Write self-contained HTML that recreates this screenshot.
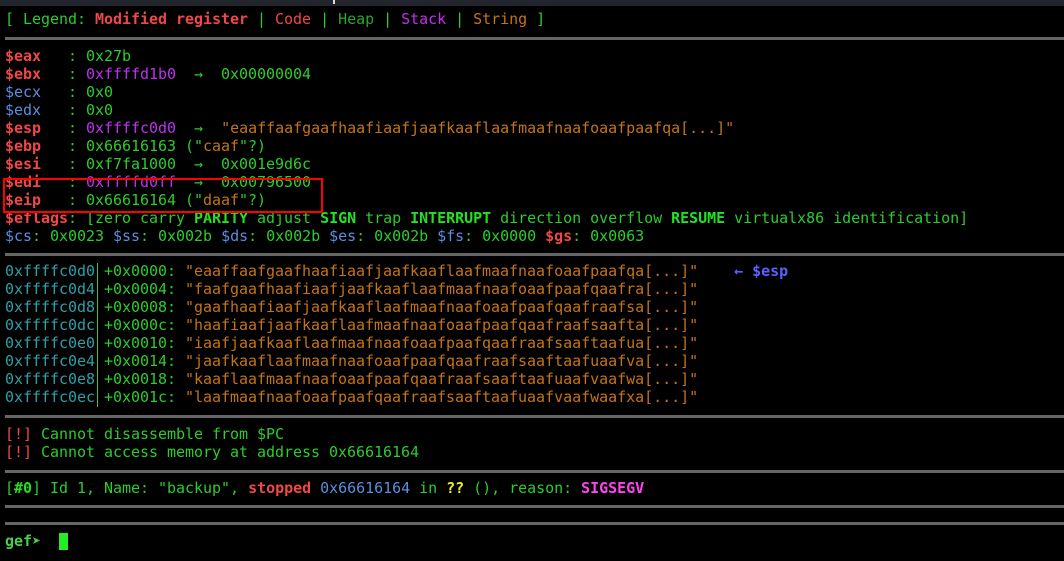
<!DOCTYPE html>
<html><head><meta charset="utf-8"><style>
body{margin:0;width:1064px;height:561px;background:#000;overflow:hidden;position:relative;font-family:"DejaVu Sans Mono","Liberation Mono",monospace;font-size:15px;color:#2ccc2c;letter-spacing:-0.03px}
.l{position:absolute;left:5px;white-space:pre;line-height:18px;height:18px}
.sep{position:absolute;left:5px;right:0;height:3px;background:#666}
.r{color:#f04848;font-weight:bold}
.rr{color:#f04848}
.m{color:#c030f0}
.b{color:#5a8ee0}
.o{color:#c47418}
.c{color:#2aa0a8}
.B{font-weight:bold;color:#22e022}
.e{color:#5a60ff;font-weight:bold}
.y{color:#f0f020;font-weight:bold}
.p{color:#ff44ee;font-weight:bold}
</style></head><body>
<div style="position:absolute;left:0;top:0;width:1064px;height:6px;background:#22252e"></div>
<div style="position:absolute;left:333px;top:0;width:2px;height:4px;background:#ddd"></div>
<div class="l" style="top:10px">[ Legend: <span class="r">Modified register</span> | <span class="rr">Code</span> | <span style="color:#28a828">Heap</span> | <span class="m">Stack</span> | <span class="o">String</span> ]</div>
<div class="sep" style="top:37px"></div>
<div class="l" style="top:47px"><span class="r">$eax  </span> : 0x27b</div>
<div class="l" style="top:65px"><span class="r">$ebx  </span> : <span class="m">0xffffd1b0</span>  →  0x00000004</div>
<div class="l" style="top:83px"><span class="b">$ecx  </span> : 0x0</div>
<div class="l" style="top:101px"><span class="b">$edx  </span> : 0x0</div>
<div class="l" style="top:119px"><span class="r">$esp  </span> : <span class="m">0xffffc0d0</span>  →  <span class="o">"eaaffaafgaafhaafiaafjaafkaaflaafmaafnaafoaafpaafqa[...]"</span></div>
<div class="l" style="top:137px"><span class="r">$ebp  </span> : 0x66616163 ("<span class="o">caaf</span>"?)</div>
<div class="l" style="top:155px"><span class="r">$esi  </span> : 0xf7fa1000  →  0x001e9d6c</div>
<div class="l" style="top:173px"><span class="r">$edi  </span> : <span class="m">0xffffd0ff</span>  →  0x00796500</div>
<div class="l" style="top:191px"><span class="r">$eip  </span> : 0x66616164 ("<span class="o">daaf</span>"?)</div>
<div class="l" style="top:209px"><span class="r">$eflags</span>: [zero carry <span class="B">PARITY</span> adjust <span class="B">SIGN</span> trap <span class="B">INTERRUPT</span> direction overflow <span class="B">RESUME</span> virtualx86 identification]</div>
<div class="l" style="top:227px"><span class="b">$cs</span>: 0x0023 <span class="b">$ss</span>: 0x002b <span class="b">$ds</span>: 0x002b <span class="b">$es</span>: 0x002b <span class="b">$fs</span>: 0x0000 <span class="r">$gs</span>: 0x0063</div>
<div style="position:absolute;left:3px;top:178px;width:316px;height:31px;border:2px solid #f00"></div>
<div class="sep" style="top:253px"></div>
<div style="position:absolute;left:97px;top:263px;width:1px;height:144px;background:#2ccc2c"></div>
<div class="l" style="top:262px"><span class="c">0xffffc0d0</span> +0x0000: <span class="o">"eaaffaafgaafhaafiaafjaafkaaflaafmaafnaafoaafpaafqa[...]"</span>    <span class="e">← $esp</span></div>
<div class="l" style="top:280px"><span class="c">0xffffc0d4</span> +0x0004: <span class="o">"faafgaafhaafiaafjaafkaaflaafmaafnaafoaafpaafqaafra[...]"</span></div>
<div class="l" style="top:298px"><span class="c">0xffffc0d8</span> +0x0008: <span class="o">"gaafhaafiaafjaafkaaflaafmaafnaafoaafpaafqaafraafsa[...]"</span></div>
<div class="l" style="top:316px"><span class="c">0xffffc0dc</span> +0x000c: <span class="o">"haafiaafjaafkaaflaafmaafnaafoaafpaafqaafraafsaafta[...]"</span></div>
<div class="l" style="top:334px"><span class="c">0xffffc0e0</span> +0x0010: <span class="o">"iaafjaafkaaflaafmaafnaafoaafpaafqaafraafsaaftaafua[...]"</span></div>
<div class="l" style="top:352px"><span class="c">0xffffc0e4</span> +0x0014: <span class="o">"jaafkaaflaafmaafnaafoaafpaafqaafraafsaaftaafuaafva[...]"</span></div>
<div class="l" style="top:370px"><span class="c">0xffffc0e8</span> +0x0018: <span class="o">"kaaflaafmaafnaafoaafpaafqaafraafsaaftaafuaafvaafwa[...]"</span></div>
<div class="l" style="top:388px"><span class="c">0xffffc0ec</span> +0x001c: <span class="o">"laafmaafnaafoaafpaafqaafraafsaaftaafuaafvaafwaafxa[...]"</span></div>
<div class="sep" style="top:415px"></div>
<div class="l" style="top:425px"><span class="rr">[!]</span> Cannot disassemble from $PC</div>
<div class="l" style="top:443px"><span class="rr">[!]</span> Cannot access memory at address 0x66616164</div>
<div class="sep" style="top:470px"></div>
<div class="l" style="top:479px">[<span class="B">#0</span>] Id 1, Name: "backup", <span class="r">stopped</span> <span class="b">0x66616164</span> in <span class="y">??</span> (), reason: <span class="p">SIGSEGV</span></div>
<div class="sep" style="top:505px"></div>
<div class="sep" style="top:522px"></div>
<div class="l" style="top:532px;font-weight:bold;color:#4ccc4c">gef➤</div>
<div style="position:absolute;left:59px;top:533px;width:9px;height:17px;background:#22ee22"></div>
</body></html>
